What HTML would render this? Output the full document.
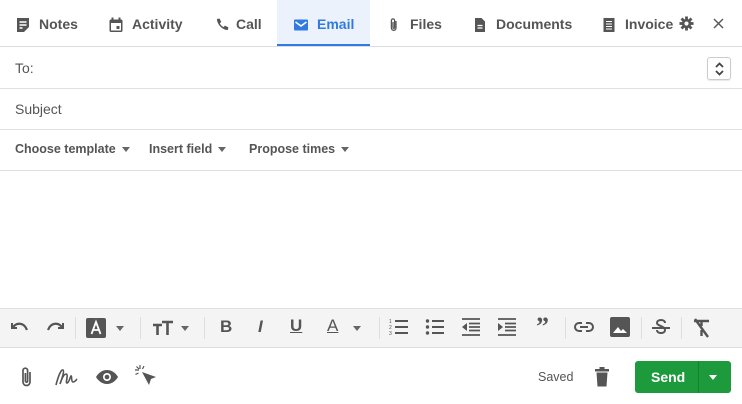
<!DOCTYPE html>
<html><head><style>
*{margin:0;padding:0;box-sizing:border-box}
body{width:742px;height:404px;background:#fff;font-family:"Liberation Sans",sans-serif;position:relative;overflow:hidden;color:#333}
.a{position:absolute}
.tab{position:absolute;top:1px;height:47px;line-height:47px;font-size:14px;font-weight:bold;color:#555;white-space:nowrap}
.tab svg{position:absolute;top:16px}
.hl{position:absolute;left:0;width:742px;height:1px;background:#e0e0e0}
.tb svg{position:absolute}
.sep{position:absolute;top:317px;width:1px;height:22px;background:#ddd}
.dd{font-size:12.5px;font-weight:bold;color:#555;position:absolute;top:142px}
.car{display:inline-block;width:0;height:0;border-left:4.5px solid transparent;border-right:4.5px solid transparent;border-top:5px solid #666;vertical-align:middle;margin-left:6px}
</style></head><body>
<div class="a" style="left:277px;top:0;width:93px;height:47px;background:#ebf2fc"></div>
<div class="a" style="left:277px;top:44px;width:93px;height:3px;background:#317ae2"></div>
<div class="hl" style="top:46px;background:#ddd"></div>

<div class="tab" style="left:15px"><svg style="left:0" width="16" height="16" viewBox="0 0 16 16"><path d="M2 1h12v9l-5 5H2z" fill="#555"/><path d="M4.5 5h7M4.5 8h7M4.5 11h3" stroke="#fff" stroke-width="1.4"/></svg><span style="margin-left:24px">Notes</span></div>
<div class="tab" style="left:108px"><svg style="left:0" width="16" height="16" viewBox="0 0 16 16"><rect x="1.5" y="2.5" width="13" height="12.5" rx="1.5" fill="#555"/><rect x="3.5" y="0.5" width="2" height="3" fill="#555"/><rect x="10.5" y="0.5" width="2" height="3" fill="#555"/><rect x="3" y="6" width="10" height="7.5" fill="#fff"/><rect x="8.5" y="9" width="3" height="3" fill="#555"/></svg><span style="margin-left:24px">Activity</span></div>
<div class="tab" style="left:214px"><svg style="left:0" width="16" height="16" viewBox="0 0 16 16"><path d="M3 2l2.5-.5 1.8 3.5-1.5 1.3c.8 1.8 2 3 3.8 3.8l1.3-1.5 3.5 1.8-.5 2.5C10 13.5 3 8.5 3 2z" fill="#555"/></svg><span style="margin-left:22px">Call</span></div>
<div class="tab" style="left:293px;color:#317ae2"><svg style="left:0" width="16" height="16" viewBox="0 0 16 16"><rect x="1" y="2.5" width="14" height="11" rx="1" fill="#317ae2"/><path d="M2.5 5l5.5 4 5.5-4" stroke="#fff" stroke-width="1.6" fill="none"/></svg><span style="margin-left:24px">Email</span></div>
<div class="tab" style="left:386px"><svg style="left:0" width="16" height="16" viewBox="0 0 16 16"><path d="M10 4v7a2.3 2.3 0 01-4.6 0V3.5a1.6 1.6 0 013.2 0V10.5a.8.8 0 01-1.6 0V5" stroke="#555" stroke-width="1.3" fill="none"/></svg><span style="margin-left:24px">Files</span></div>
<div class="tab" style="left:472px"><svg style="left:0" width="16" height="16" viewBox="0 0 16 16"><path d="M3 1h6.5L13 4.5V15H3z" fill="#555"/><path d="M5.5 8.5h5M5.5 11h5" stroke="#fff" stroke-width="1.2"/></svg><span style="margin-left:24px">Documents</span></div>
<div class="tab" style="left:601px"><svg style="left:0" width="16" height="16" viewBox="0 0 16 16"><path d="M2.5 1h11v14h-11z" fill="#555"/><path d="M5 4.5h6M5 7h6M5 9.5h6M5 12h6" stroke="#fff" stroke-width="1.1"/></svg><span style="margin-left:24px">Invoice</span></div>
<svg class="a" style="left:679px;top:16px" width="15" height="15" viewBox="0 0 16 16"><g fill="#555"><circle cx="8" cy="8" r="5"/><rect x="6.5" y="0.5" width="3" height="15"/><rect x="0.5" y="6.5" width="15" height="3"/><rect x="6.5" y="0.5" width="3" height="15" transform="rotate(45 8 8)"/><rect x="6.5" y="0.5" width="3" height="15" transform="rotate(-45 8 8)"/></g><circle cx="8" cy="8" r="2.2" fill="#fff"/></svg>
<svg class="a" style="left:713px;top:18px" width="11" height="11" viewBox="0 0 11 11"><path d="M1 1l9 9M10 1l-9 9" stroke="#555" stroke-width="1.4"/></svg>

<div class="a" style="left:15px;top:60px;font-size:14px;color:#555">To:</div>
<div class="a" style="left:707px;top:57px;width:24px;height:23px;border:1px solid #ccc;border-radius:3px;box-shadow:0 1px 1px rgba(0,0,0,.1)"><svg style="position:absolute;left:6px;top:4px" width="11" height="14" viewBox="0 0 11 14"><path d="M2 5l3.5-3.5L9 5M2 9l3.5 3.5L9 9" stroke="#444" stroke-width="1.8" fill="none"/></svg></div>
<div class="hl" style="top:88px"></div>
<div class="a" style="left:15px;top:101px;font-size:14px;color:#555">Subject</div>
<div class="hl" style="top:129px"></div>
<div class="dd" style="left:15px">Choose template<span class="car"></span></div>
<div class="dd" style="left:149px">Insert field<span class="car"></span></div>
<div class="dd" style="left:249px">Propose times<span class="car"></span></div>
<div class="hl" style="top:170px"></div>

<div class="a" style="left:0;top:308px;width:742px;height:40px;background:#f4f4f4;border-top:1px solid #e0e0e0;border-bottom:1px solid #ddd"></div>
<div class="tb">
<svg style="left:9px;top:319px" width="22" height="16" viewBox="0 0 22 16"><path d="M3 4v5h5" fill="none" stroke="#555" stroke-width="2"/><path d="M3.5 9C7 3 15 3 18 11" fill="none" stroke="#555" stroke-width="2.2"/></svg>
<svg style="left:44px;top:319px" width="22" height="16" viewBox="0 0 22 16"><g transform="translate(22 0) scale(-1 1)"><path d="M3 4v5h5" fill="none" stroke="#555" stroke-width="2"/><path d="M3.5 9C7 3 15 3 18 11" fill="none" stroke="#555" stroke-width="2.2"/></g></svg>
<div class="sep" style="left:75px"></div>
<svg style="left:86px;top:318px" width="20" height="20" viewBox="0 0 20 20"><rect width="20" height="20" rx="2" fill="#555"/><path d="M5.5 16L10 4l4.5 12M7 12h6" stroke="#fff" stroke-width="1.8" fill="none"/></svg>
<span class="car" style="position:absolute;left:116px;top:326px;margin:0"></span>
<div class="sep" style="left:140px"></div>
<svg style="left:152px;top:320px" width="22" height="16" viewBox="0 0 22 16"><path d="M1 5h9M5.5 5v10M10 2h11M15.5 2v13" stroke="#555" stroke-width="2.6" fill="none"/></svg>
<span class="car" style="position:absolute;left:181px;top:326px;margin:0"></span>
<div class="sep" style="left:204px"></div>
<div class="a" style="left:220px;top:317px;font-size:17px;font-weight:bold;color:#555">B</div>
<div class="a" style="left:258px;top:317px;font-size:17px;font-weight:bold;font-style:italic;color:#555">I</div>
<div class="a" style="left:290px;top:316px;font-size:17px;color:#555;text-decoration:underline;font-weight:bold">U</div>
<div class="a" style="left:327px;top:316px;font-size:17px;color:#555;text-decoration:underline">A</div>
<span class="car" style="position:absolute;left:353px;top:326px;margin:0"></span>
<div class="sep" style="left:379px"></div>
<svg style="left:389px;top:318px" width="20" height="18" viewBox="0 0 20 18"><path d="M6 3h13M6 9h13M6 15h13" stroke="#555" stroke-width="2"/><text x="0" y="5" font-size="5" fill="#555" font-family="Liberation Sans">1</text><text x="0" y="11" font-size="5" fill="#555" font-family="Liberation Sans">2</text><text x="0" y="17" font-size="5" fill="#555" font-family="Liberation Sans">3</text></svg>
<svg style="left:425px;top:318px" width="20" height="18" viewBox="0 0 20 18"><path d="M7 3h12M7 9h12M7 15h12" stroke="#555" stroke-width="2"/><circle cx="2.5" cy="3" r="1.7" fill="#555"/><circle cx="2.5" cy="9" r="1.7" fill="#555"/><circle cx="2.5" cy="15" r="1.7" fill="#555"/></svg>
<svg style="left:461px;top:318px" width="20" height="18" viewBox="0 0 20 18"><path d="M1 1h18M8 5.5h11M8 9h11M8 12.5h11M1 17h18" stroke="#555" stroke-width="1.8"/><path d="M6 5v8L1 9z" fill="#555"/></svg>
<svg style="left:497px;top:318px" width="20" height="18" viewBox="0 0 20 18"><path d="M1 1h18M8 5.5h11M8 9h11M8 12.5h11M1 17h18" stroke="#555" stroke-width="1.8"/><path d="M1 5v8l5-4z" fill="#555"/></svg>
<div class="a" style="left:536px;top:312px;font-size:26px;font-weight:bold;color:#555;font-family:'Liberation Serif',serif">”</div>
<div class="sep" style="left:565px"></div>
<svg style="left:573px;top:319px" width="22" height="16" viewBox="0 0 22 16"><path d="M9 4H6a4 4 0 000 8h3M13 4h3a4 4 0 010 8h-3M7 8h8" stroke="#555" stroke-width="2" fill="none"/></svg>
<svg style="left:610px;top:317px" width="20" height="20" viewBox="0 0 20 20"><rect width="20" height="20" rx="2" fill="#555"/><path d="M3 16l5-6 3 4 2-2 4 4z" fill="#fff"/></svg>
<div class="sep" style="left:641px"></div>
<svg style="left:651px;top:318px" width="20" height="20" viewBox="0 0 20 20"><path d="M1 10h18" stroke="#555" stroke-width="2"/><path d="M14 5c0-2-2-3-4-3s-4 1-4 3c0 3 8 3 8 7 0 2-2 3-4 3s-4-1-4-3" stroke="#555" stroke-width="2" fill="none"/></svg>
<div class="sep" style="left:681px"></div>
<svg style="left:692px;top:318px" width="20" height="20" viewBox="0 0 20 20"><path d="M2 3h15M9.5 3v5M9.5 12v6M3 1l13 18" stroke="#555" stroke-width="2.4" fill="none"/></svg>
</div>

<svg class="a" style="left:19px;top:366px" width="16" height="22" viewBox="0 0 16 22"><path d="M11 6v10a3.5 3.5 0 01-7 0V4.5a2.3 2.3 0 014.6 0V15a1.1 1.1 0 01-2.2 0V7" stroke="#555" stroke-width="1.7" fill="none"/></svg>
<svg class="a" style="left:55px;top:367px" width="24" height="20" viewBox="0 0 24 20"><path d="M1 18C3 10 6 2 8 3s-3 14-3 14 3-10 6-10-1 9 1 9 3-6 4-7 0 6 2 6 3-2 4-3" stroke="#555" stroke-width="1.6" fill="none"/></svg>
<svg class="a" style="left:95px;top:369px" width="24" height="16" viewBox="0 0 24 16"><path d="M1 8c3-5 7-7 11-7s8 2 11 7c-3 5-7 7-11 7S4 13 1 8z" fill="#555"/><circle cx="12" cy="8" r="4" fill="#fff"/><circle cx="12" cy="8" r="2.3" fill="#555"/></svg>
<svg class="a" style="left:134px;top:364px" width="24" height="26" viewBox="0 0 24 26"><path d="M8 8l14 5-5 2-2 6z" fill="#555"/><path d="M6 1v4M1 6h4M2.5 2.5l2.5 2.5M10 2l-1.5 3M1.5 10.5l3-1.5" stroke="#555" stroke-width="1.2"/></svg>
<div class="a" style="left:538px;top:370px;font-size:12.5px;color:#555">Saved</div>
<svg class="a" style="left:594px;top:366px" width="16" height="21" viewBox="0 0 16 21"><rect x="1" y="3" width="14" height="2.5" fill="#555"/><rect x="5.5" y="1" width="5" height="3" fill="#555"/><path d="M2.5 6.5h11l-1 14h-9z" fill="#555"/></svg>
<div class="a" style="left:635px;top:361px;width:96px;height:32px;background:#1c9a3c;border-radius:3px"></div>
<div class="a" style="left:698px;top:361px;width:1px;height:32px;background:#15802f"></div>
<div class="a" style="left:651px;top:369px;font-size:14px;font-weight:bold;color:#fff">Send</div>
<span class="car" style="position:absolute;left:709px;top:375px;margin:0;border-top-color:#fff"></span>
</body></html>
